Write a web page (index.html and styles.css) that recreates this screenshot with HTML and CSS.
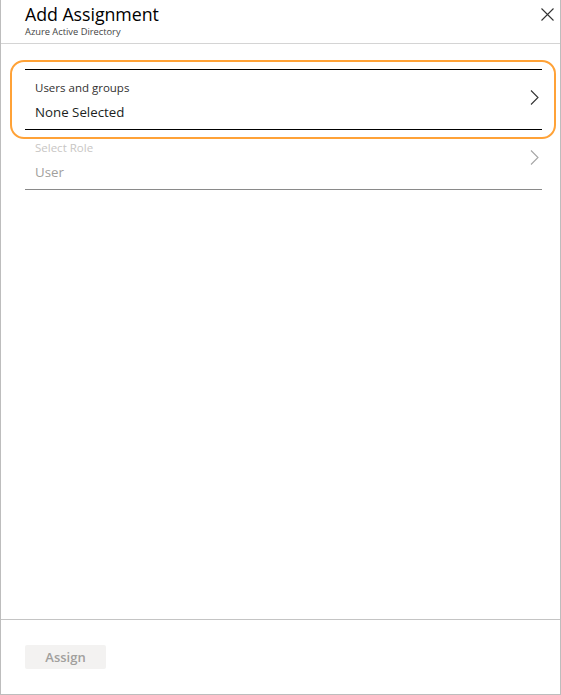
FILE: index.html
```html
<!DOCTYPE html>
<html>
<head>
<meta charset="utf-8">
<link rel="stylesheet" href="styles.css">
</head>
<body>
<div class="panel">
  <header class="head">
    <div class="titles">
      <h1 class="title">Add Assignment</h1>
      <div class="subtitle">Azure Active Directory</div>
    </div>
    <button class="close" aria-label="Close">
      <svg width="13" height="13" viewBox="0 0 13 13"><path d="M0.5 0.5 L12.5 12.5 M12.5 0.5 L0.5 12.5" stroke="#333" stroke-width="1.1" fill="none"/></svg>
    </button>
  </header>
  <main class="body">
    <div class="field field-active">
      <div class="highlight"></div>
      <div class="label">Users and groups</div>
      <div class="value">None Selected</div>
      <svg class="chev" width="9" height="15" viewBox="0 0 9 15"><path d="M1 0.5 L8 7.5 L1 14.5" stroke="#333" stroke-width="1.1" fill="none"/></svg>
    </div>
    <div class="field field-disabled">
      <div class="label">Select Role</div>
      <div class="value">User</div>
      <svg class="chev" width="9" height="15" viewBox="0 0 9 15"><path d="M1 0.5 L8 7.5 L1 14.5" stroke="#a6a6a6" stroke-width="1.1" fill="none"/></svg>
    </div>
  </main>
  <footer class="foot">
    <button class="assign" disabled>Assign</button>
  </footer>
</div>
</body>
</html>
```
FILE: styles.css
```css
* { box-sizing: border-box; }
html, body { margin: 0; padding: 0; background: #fff; }
body { font-family: "Open Sans", "Noto Sans", sans-serif; color: #323130; }
.panel {
  width: 561px;
  height: 695px;
  border-left: 1px solid #bdbdbd;
  border-right: 1px solid #bdbdbd;
  border-bottom: 1px solid #bdbdbd;
  display: flex;
  flex-direction: column;
}
.head {
  height: 44px;
  border-bottom: 1px solid #d4d4d4;
  display: flex;
  justify-content: space-between;
  align-items: flex-start;
  padding: 0 6px 0 24px;
}
.title {
  margin: 3px 0 0;
  font-size: 17.8px;
  font-weight: 400;
  line-height: 22px;
  color: #000;
  letter-spacing: -0.05px;
}
.subtitle {
  font-size: 9.3px;
  line-height: 12px;
  color: #444;
  margin-top: 1px;
}
.close {
  border: 0;
  background: none;
  padding: 0;
  margin-top: 8px;
  width: 13px;
  height: 13px;
  display: block;
}
.close svg { display: block; }
.body {
  flex: 1;
  padding: 25px 18px 0 24px;
}
.field {
  position: relative;
  padding: 10px 0 7px 10px;
  border-bottom: 1px solid #8a8a8a;
}
.field-active {
  border-top: 1px solid #000;
  border-bottom: 1px solid #000;
}
.highlight {
  position: absolute;
  top: -10px;
  left: -15px;
  right: -14px;
  bottom: -10px;
  border: 2px solid #ffa237;
  border-radius: 14px;
  pointer-events: none;
}
.label {
  font-size: 11.5px;
  line-height: 16px;
  color: #323130;
}
.value {
  margin-top: 6px;
  font-size: 13.3px;
  line-height: 20px;
  color: #201f1e;
}
.field-disabled .label { color: #c8c6c4; }
.field-disabled .value { color: #a19f9d; }
.chev {
  position: absolute;
  right: 3px;
  top: 20px;
  display: block;
}
.foot {
  height: 75px;
  border-top: 1px solid #c4c4c4;
  padding: 25px 0 0 24px;
}
.assign {
  width: 81px;
  height: 24px;
  border: 0;
  border-radius: 2px;
  background: #f3f2f1;
  color: #a19f9d;
  font-family: "Open Sans", "Noto Sans", sans-serif;
  font-size: 13px;
  font-weight: 600;
  padding: 0;
}
```
